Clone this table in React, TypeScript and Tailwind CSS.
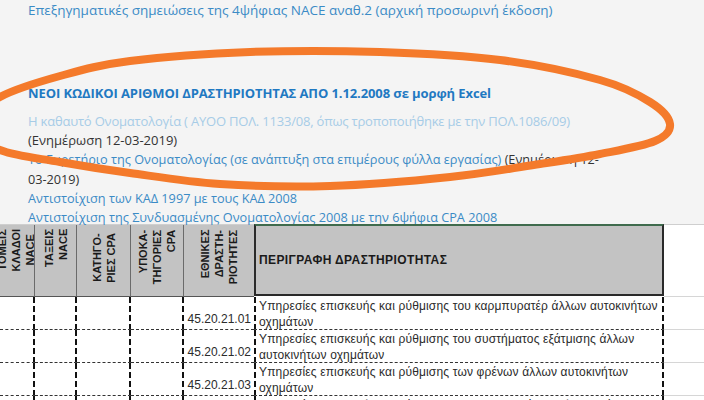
import React from "react";

type Row = { code: string; l1: string; l2: string };

const rows: Row[] = [
  { code: "45.20.21.01", l1: "Υπηρεσίες επισκευής και ρύθμισης του καρμπυρατέρ άλλων αυτοκινήτων", l2: "οχημάτων" },
  { code: "45.20.21.02", l1: "Υπηρεσίες επισκευής και ρύθμισης του συστήματος εξάτμισης άλλων", l2: "αυτοκινήτων οχημάτων" },
  { code: "45.20.21.03", l1: "Υπηρεσίες επισκευής και ρύθμισης των φρένων άλλων αυτοκινήτων", l2: "οχημάτων" },
  { code: "45.20.21.04", l1: "Υπηρεσίες επισκευής και ρύθμισης του ηλεκτρικού συστήματος άλλων αυτοκινήτων", l2: "οχημάτων" },
];

// hand drawn marker loop, catmull-rom through the points
const loop: [number, number][] = [
  [-30, 125], [0, 97], [60, 76], [130, 61], [250, 52], [380, 52], [500, 60], [600, 80], [650, 102], [670, 124],
  [655, 141], [600, 154], [540, 164], [450, 177], [330, 186], [220, 184], [130, 173], [60, 162], [0, 150],
];

function smoothPath(pts: [number, number][]) {
  const n = pts.length;
  let d = `M ${pts[0][0]} ${pts[0][1]}`;
  for (let i = 0; i < n; i++) {
    const p0 = pts[(i - 1 + n) % n];
    const p1 = pts[i];
    const p2 = pts[(i + 1) % n];
    const p3 = pts[(i + 2) % n];
    const c1x = p1[0] + (p2[0] - p0[0]) / 6;
    const c1y = p1[1] + (p2[1] - p0[1]) / 6;
    const c2x = p2[0] - (p3[0] - p1[0]) / 6;
    const c2y = p2[1] - (p3[1] - p1[1]) / 6;
    d += ` C ${c1x} ${c1y}, ${c2x} ${c2y}, ${p2[0]} ${p2[1]}`;
  }
  return d;
}

function VHead({ lines, className = "" }: { lines: string[]; className?: string }) {
  return (
    <div className={`h-full bg-[#c3c3c3] border-r border-[#6b6b6b] border-b border-b-[#555] flex justify-center items-start overflow-hidden ${className}`}>
      <div className="[writing-mode:vertical-rl] rotate-180 text-end text-[11px] font-bold leading-[14px] text-[#1a1a1a]">
        {lines.map((l, i) => (
          <div key={i}>{l}</div>
        ))}
      </div>
    </div>
  );
}

export default function App() {
  return (
    <div className="relative w-[704px] h-[400px] overflow-hidden bg-white">
      {/* page section */}
      <div className="h-[224px] bg-[#f4f4f4] pl-[28px] font-['Open_Sans',sans-serif] text-[12.7px]">
        <p className="leading-[20px] text-[13.5px] text-[#3b8bc6]">
          Επεξηγηματικές σημειώσεις της 4ψήφιας NACE αναθ.2 (αρχική προσωρινή έκδοση)
        </p>
        <p className="mt-[63px] leading-[20px] font-bold text-[13px] tracking-[-0.1px] text-[#1f79c2]">
          ΝΕΟΙ ΚΩΔΙΚΟΙ ΑΡΙΘΜΟΙ ΔΡΑΣΤΗΡΙΟΤΗΤΑΣ ΑΠΟ 1.12.2008 σε μορφή Excel
        </p>
        <div className="mt-[9px] leading-[19.2px]">
          <p className="text-[#a7cce7] text-[13px] tracking-[-0.2px]">
            Η καθαυτό Ονοματολογία ( ΑΥΟΟ ΠΟΛ. 1133/08, όπως τροποποιήθηκε με την ΠΟΛ.1086/09)
          </p>
          <p className="text-[#333] text-[13px]">(Ενημέρωση 12-03-2019)</p>
          <p className="text-[#333]">
            <span className="text-[#3b8bc6]">
              Το Ευρετήριο της Ονοματολογίας (σε ανάπτυξη στα επιμέρους φύλλα εργασίας)
            </span>{" "}
            (Ενημέρωση 12-
            <br />
            03-2019)
          </p>
          <p className="text-[#3b8bc6]">Αντιστοίχιση των ΚΑΔ 1997 με τους ΚΑΔ 2008</p>
          <p className="text-[#3b8bc6]">
            Αντιστοίχιση της Συνδυασμένης Ονοματολογίας 2008 με την 6ψήφια CPA 2008
          </p>
        </div>
      </div>

      {/* excel sheet */}
      <div className="grid grid-cols-[35px_42px_54px_53px_70px_410px_40px] grid-rows-[72px_33px_33px_33px_33px] font-['Liberation_Sans',Arial,sans-serif] border-t border-[#cfcfcf]">
        <div className="h-full bg-[#c3c3c3] border-r border-[#6b6b6b] border-b border-b-[#555] overflow-hidden relative">
          <div className="absolute left-[-5px] top-[4px] [writing-mode:vertical-rl] rotate-180 text-center text-[11px] font-bold leading-[14px] text-[#1a1a1a]">
            <div>ΤΟΜΕΙΣ</div>
            <div>ΚΛΑΔΟΙ</div>
            <div>NACE</div>
          </div>
        </div>
        <VHead lines={["ΤΑΞΕΙΣ", "NACE"]} className="pt-[4px]" />
        <VHead lines={["ΚΑΤΗΓΟ-", "ΡΙΕΣ CPA"]} className="pt-[8px]" />
        <VHead lines={["ΥΠΟΚΑ-", "ΤΗΓΟΡΙΕΣ", "CPA"]} className="pt-[5px]" />
        <VHead lines={["ΕΘΝΙΚΕΣ", "ΔΡΑΣΤΗ-", "ΡΙΟΤΗΤΕΣ"]} className="pt-[5px] border-r-0" />
        <div className="h-full bg-[#c3c3c3] border-x-2 border-[#2a2a2a] border-t-2 border-t-[#3f6b4d] border-b-2 border-b-[#2a2a2a] flex items-center pl-[3px] mt-[-1px]">
          <span className="text-[12px] font-bold tracking-[0.4px] text-[#1a1a1a]">ΠΕΡΙΓΡΑΦΗ ΔΡΑΣΤΗΡΙΟΤΗΤΑΣ</span>
        </div>
        <div className="h-full bg-white border-b border-[#d6d6d6]" />

        {rows.map((r) => (
          <React.Fragment key={r.code}>
            <div className="border-r-2 border-r-[#111] border-b border-dashed border-b-[#333]" />
            <div className="border-r-2 border-r-[#111] border-b border-dashed border-b-[#333]" />
            <div className="border-r-2 border-r-[#111] border-b border-dashed border-b-[#333]" />
            <div className="border-r-2 border-r-[#111] border-b border-dashed border-b-[#333]" />
            <div className="border-b border-dashed border-b-[#333] flex items-end justify-end pr-[3px] pb-[2px] text-[12px] leading-[15px] text-[#2b2b2b]">
              {r.code}
            </div>
            <div className="border-x-2 border-x-[#111] border-b border-dashed border-b-[#333] pl-[3px] pt-[1px] text-[12px] tracking-[0.15px] leading-[16px] text-[#2b2b2b] whitespace-nowrap overflow-hidden">
              <div>{r.l1}</div>
              <div>{r.l2}</div>
            </div>
            <div className="border-b border-[#d6d6d6]" />
          </React.Fragment>
        ))}
      </div>

      {/* orange marker loop drawn over the page */}
      <svg className="absolute inset-0 pointer-events-none" width="704" height="400" viewBox="0 0 704 400">
        <path d={smoothPath(loop)} fill="none" stroke="#f47a2b" strokeWidth="8" strokeLinecap="round" strokeLinejoin="round" />
      </svg>
    </div>
  );
}
